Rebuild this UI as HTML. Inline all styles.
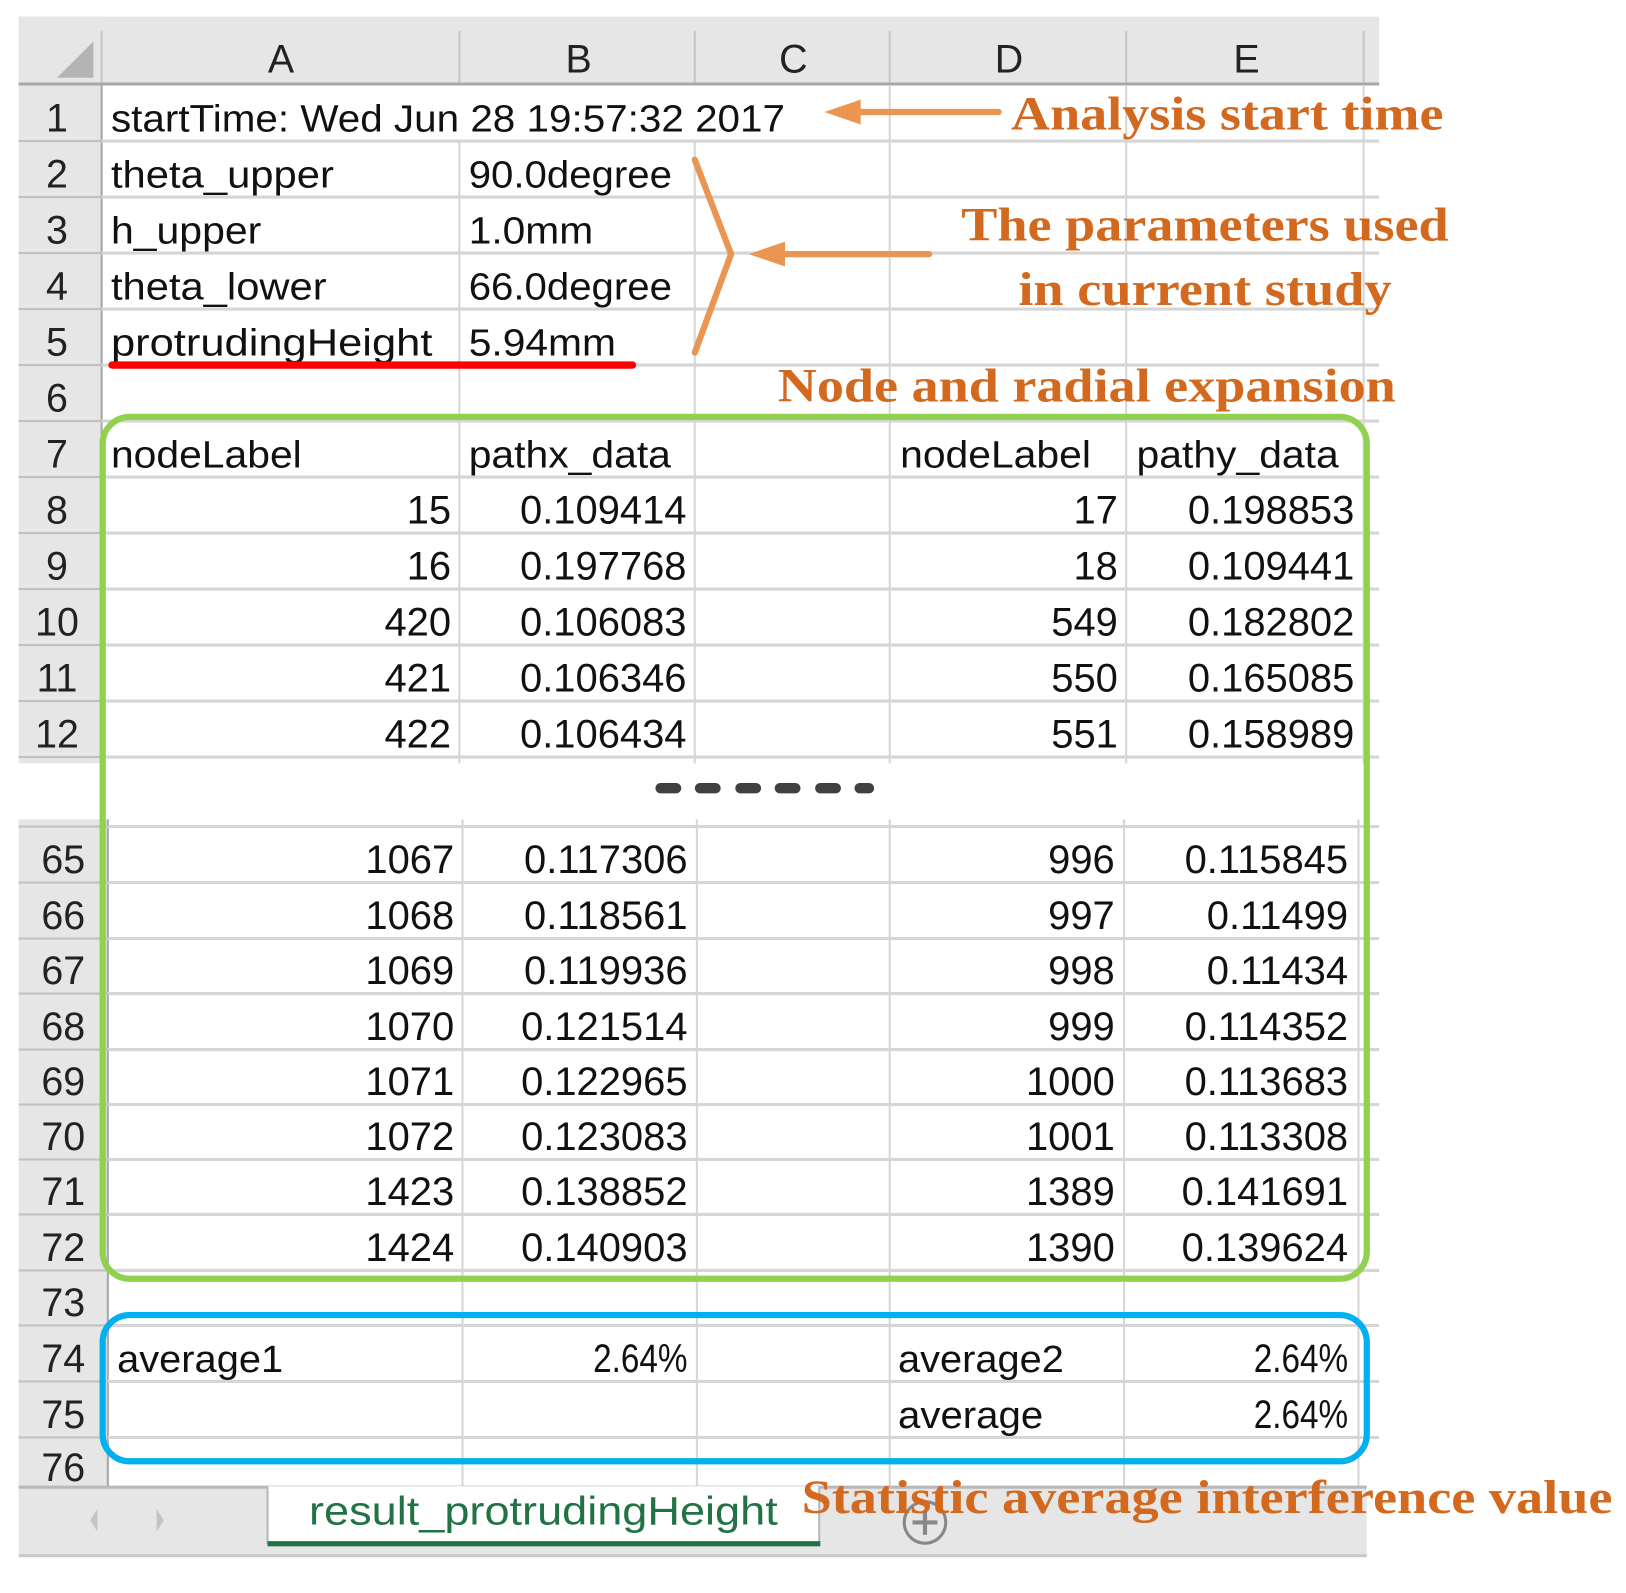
<!DOCTYPE html>
<html><head><meta charset="utf-8"><style>
html,body{margin:0;padding:0;background:#fff;overflow:hidden}
svg{display:block}
.t{font-family:"Liberation Sans",sans-serif;font-size:37px;fill:#111}
.h{font-family:"Liberation Sans",sans-serif;font-size:38px;fill:#222;text-anchor:middle}
.o{font-family:"Liberation Serif",serif;font-weight:bold;font-size:46px;fill:#D2691E}
.r{text-anchor:end}
</style></head><body>
<svg width="1626" height="1593" viewBox="0 0 1568 1536" preserveAspectRatio="none" xmlns="http://www.w3.org/2000/svg">
<rect width="1568" height="1536" fill="#fff"/>
<rect x="18" y="16" width="1312" height="66" fill="#e6e6e6"/>
<rect x="18" y="16" width="80" height="720" fill="#e6e6e6"/>
<rect x="18" y="790" width="86" height="643" fill="#e6e6e6"/>
<polygon points="90,40 90,75 55,75" fill="#b4b4b4"/>
<g stroke="#c6c6c6" stroke-width="2">
<line x1="98" y1="30" x2="98" y2="82"/><line x1="443" y1="30" x2="443" y2="82"/><line x1="670" y1="30" x2="670" y2="82"/><line x1="858" y1="30" x2="858" y2="82"/><line x1="1086" y1="30" x2="1086" y2="82"/><line x1="1315" y1="30" x2="1315" y2="82"/>
</g>
<line x1="18" y1="81" x2="1330" y2="81" stroke="#a8a8a8" stroke-width="3"/>
<line x1="98" y1="82" x2="98" y2="736" stroke="#a8a8a8" stroke-width="2"/>
<line x1="104" y1="790" x2="104" y2="1433" stroke="#a8a8a8" stroke-width="2"/>
<g stroke="#d6d6d6" stroke-width="2">
<line x1="443" y1="136" x2="443" y2="736"/><line x1="670" y1="136" x2="670" y2="736"/><line x1="858" y1="82" x2="858" y2="736"/><line x1="1086" y1="82" x2="1086" y2="736"/><line x1="1315" y1="82" x2="1315" y2="736"/>
<line x1="446" y1="790" x2="446" y2="1433"/><line x1="672" y1="790" x2="672" y2="1433"/><line x1="858" y1="790" x2="858" y2="1433"/><line x1="1084" y1="790" x2="1084" y2="1433"/><line x1="1310" y1="790" x2="1310" y2="1433"/>
</g>
<g stroke="#d6d6d6" stroke-width="3">
<line x1="98" y1="136" x2="1330" y2="136"/><line x1="98" y1="190" x2="1330" y2="190"/><line x1="98" y1="244" x2="1330" y2="244"/><line x1="98" y1="298" x2="1330" y2="298"/><line x1="98" y1="352" x2="1330" y2="352"/><line x1="98" y1="406" x2="1330" y2="406"/><line x1="98" y1="460" x2="1330" y2="460"/><line x1="98" y1="514" x2="1330" y2="514"/><line x1="98" y1="568" x2="1330" y2="568"/><line x1="98" y1="622" x2="1330" y2="622"/><line x1="98" y1="676" x2="1330" y2="676"/><line x1="98" y1="730" x2="1330" y2="730"/>
<line x1="104" y1="797" x2="1330" y2="797"/><line x1="104" y1="851" x2="1330" y2="851"/><line x1="104" y1="905" x2="1330" y2="905"/><line x1="104" y1="958" x2="1330" y2="958"/><line x1="104" y1="1012" x2="1330" y2="1012"/><line x1="104" y1="1065" x2="1330" y2="1065"/><line x1="104" y1="1118" x2="1330" y2="1118"/><line x1="104" y1="1171" x2="1330" y2="1171"/><line x1="104" y1="1225" x2="1330" y2="1225"/><line x1="104" y1="1278" x2="1330" y2="1278"/><line x1="104" y1="1332" x2="1330" y2="1332"/><line x1="104" y1="1386" x2="1330" y2="1386"/>
</g>
<g stroke="#c0c0c0" stroke-width="2">
<line x1="18" y1="136" x2="98" y2="136"/><line x1="18" y1="190" x2="98" y2="190"/><line x1="18" y1="244" x2="98" y2="244"/><line x1="18" y1="298" x2="98" y2="298"/><line x1="18" y1="352" x2="98" y2="352"/><line x1="18" y1="406" x2="98" y2="406"/><line x1="18" y1="460" x2="98" y2="460"/><line x1="18" y1="514" x2="98" y2="514"/><line x1="18" y1="568" x2="98" y2="568"/><line x1="18" y1="622" x2="98" y2="622"/><line x1="18" y1="676" x2="98" y2="676"/><line x1="18" y1="730" x2="98" y2="730"/>
<line x1="18" y1="797" x2="104" y2="797"/><line x1="18" y1="851" x2="104" y2="851"/><line x1="18" y1="905" x2="104" y2="905"/><line x1="18" y1="958" x2="104" y2="958"/><line x1="18" y1="1012" x2="104" y2="1012"/><line x1="18" y1="1065" x2="104" y2="1065"/><line x1="18" y1="1118" x2="104" y2="1118"/><line x1="18" y1="1171" x2="104" y2="1171"/><line x1="18" y1="1225" x2="104" y2="1225"/><line x1="18" y1="1278" x2="104" y2="1278"/><line x1="18" y1="1332" x2="104" y2="1332"/><line x1="18" y1="1386" x2="104" y2="1386"/>
</g>
<text class="h" x="271" y="70">A</text><text class="h" x="558" y="70">B</text><text class="h" x="765" y="70">C</text><text class="h" x="973" y="70">D</text><text class="h" x="1202" y="70">E</text>
<g class="h">
<text x="55" y="127">1</text><text x="55" y="181">2</text><text x="55" y="235">3</text><text x="55" y="289">4</text><text x="55" y="343">5</text><text x="55" y="397">6</text><text x="55" y="451">7</text><text x="55" y="505">8</text><text x="55" y="559">9</text><text x="55" y="613">10</text><text x="55" y="667">11</text><text x="55" y="721">12</text>
<text x="61" y="842">65</text><text x="61" y="896">66</text><text x="61" y="949">67</text><text x="61" y="1003">68</text><text x="61" y="1056">69</text><text x="61" y="1109">70</text><text x="61" y="1162">71</text><text x="61" y="1216">72</text><text x="61" y="1269">73</text><text x="61" y="1323">74</text><text x="61" y="1377">75</text><text x="61" y="1428">76</text>
</g>
<g class="t">
<text x="107" y="127" textLength="650" lengthAdjust="spacingAndGlyphs">startTime: Wed Jun 28 19:57:32 2017</text>
<text x="107" y="181" textLength="215" lengthAdjust="spacingAndGlyphs">theta_upper</text><text x="452" y="181" textLength="196" lengthAdjust="spacingAndGlyphs">90.0degree</text>
<text x="107" y="235" textLength="145" lengthAdjust="spacingAndGlyphs">h_upper</text><text x="452" y="235" textLength="120" lengthAdjust="spacingAndGlyphs">1.0mm</text>
<text x="107" y="289" textLength="208" lengthAdjust="spacingAndGlyphs">theta_lower</text><text x="452" y="289" textLength="196" lengthAdjust="spacingAndGlyphs">66.0degree</text>
<text x="107" y="343" textLength="310" lengthAdjust="spacingAndGlyphs">protrudingHeight</text><text x="452" y="343" textLength="142" lengthAdjust="spacingAndGlyphs">5.94mm</text>
<text x="107" y="451" textLength="184" lengthAdjust="spacingAndGlyphs">nodeLabel</text><text x="452" y="451" textLength="195" lengthAdjust="spacingAndGlyphs">pathx_data</text><text x="868" y="451" textLength="184" lengthAdjust="spacingAndGlyphs">nodeLabel</text><text x="1096" y="451" textLength="195" lengthAdjust="spacingAndGlyphs">pathy_data</text>
</g>
<g class="t r" style="font-size:38.5px">
<text x="435" y="505">15</text><text x="662" y="505">0.109414</text><text x="1078" y="505">17</text><text x="1306" y="505">0.198853</text>
<text x="435" y="559">16</text><text x="662" y="559">0.197768</text><text x="1078" y="559">18</text><text x="1306" y="559">0.109441</text>
<text x="435" y="613">420</text><text x="662" y="613">0.106083</text><text x="1078" y="613">549</text><text x="1306" y="613">0.182802</text>
<text x="435" y="667">421</text><text x="662" y="667">0.106346</text><text x="1078" y="667">550</text><text x="1306" y="667">0.165085</text>
<text x="435" y="721">422</text><text x="662" y="721">0.106434</text><text x="1078" y="721">551</text><text x="1306" y="721">0.158989</text>
<text x="438" y="842">1067</text><text x="663" y="842">0.117306</text><text x="1075" y="842">996</text><text x="1300" y="842">0.115845</text>
<text x="438" y="896">1068</text><text x="663" y="896">0.118561</text><text x="1075" y="896">997</text><text x="1300" y="896">0.11499</text>
<text x="438" y="949">1069</text><text x="663" y="949">0.119936</text><text x="1075" y="949">998</text><text x="1300" y="949">0.11434</text>
<text x="438" y="1003">1070</text><text x="663" y="1003">0.121514</text><text x="1075" y="1003">999</text><text x="1300" y="1003">0.114352</text>
<text x="438" y="1056">1071</text><text x="663" y="1056">0.122965</text><text x="1075" y="1056">1000</text><text x="1300" y="1056">0.113683</text>
<text x="438" y="1109">1072</text><text x="663" y="1109">0.123083</text><text x="1075" y="1109">1001</text><text x="1300" y="1109">0.113308</text>
<text x="438" y="1162">1423</text><text x="663" y="1162">0.138852</text><text x="1075" y="1162">1389</text><text x="1300" y="1162">0.141691</text>
<text x="438" y="1216">1424</text><text x="663" y="1216">0.140903</text><text x="1075" y="1216">1390</text><text x="1300" y="1216">0.139624</text>
<text x="663" y="1323" textLength="91" lengthAdjust="spacingAndGlyphs">2.64%</text><text x="1300" y="1323" textLength="91" lengthAdjust="spacingAndGlyphs">2.64%</text><text x="1300" y="1377" textLength="91" lengthAdjust="spacingAndGlyphs">2.64%</text>
</g>
<g class="t"><text x="113" y="1323" textLength="160" lengthAdjust="spacingAndGlyphs">average1</text><text x="866" y="1323" textLength="160" lengthAdjust="spacingAndGlyphs">average2</text><text x="866" y="1377" textLength="140" lengthAdjust="spacingAndGlyphs">average</text></g>
<g stroke="#404040" stroke-width="10" stroke-linecap="round">
<line x1="637" y1="760" x2="652" y2="760"/><line x1="675" y1="760" x2="690" y2="760"/><line x1="714" y1="760" x2="729" y2="760"/><line x1="752" y1="760" x2="767" y2="760"/><line x1="791" y1="760" x2="806" y2="760"/><line x1="829" y1="760" x2="838" y2="760"/>
</g>
<rect x="18" y="1433" width="1300" height="67" fill="#e6e6e6"/>
<line x1="18" y1="1434" x2="1318" y2="1434" stroke="#b8b8b8" stroke-width="3"/>
<line x1="18" y1="1500" x2="1318" y2="1500" stroke="#c8c8c8" stroke-width="3"/>
<rect x="258" y="1433" width="532" height="56" fill="#fff"/>
<line x1="258" y1="1433" x2="258" y2="1489" stroke="#b8b8b8" stroke-width="2"/><line x1="790" y1="1433" x2="790" y2="1489" stroke="#b8b8b8" stroke-width="2"/>
<rect x="258" y="1486" width="533" height="5" fill="#217346"/>
<text x="298" y="1470" style="font-family:'Liberation Sans',sans-serif;font-size:38px;fill:#217346" textLength="452" lengthAdjust="spacingAndGlyphs">result_protrudingHeight</text>
<polygon points="94,1455 87,1466 94,1477" fill="#c4c4c4"/><polygon points="151,1455 158,1466 151,1477" fill="#c4c4c4"/>
<circle cx="892" cy="1468" r="20" fill="none" stroke="#888" stroke-width="3"/>
<path d="M880 1468h24M892 1456v24" stroke="#888" stroke-width="4"/>
<line x1="108" y1="352" x2="610" y2="352" stroke="#f00" stroke-width="7" stroke-linecap="round"/>
<rect x="99" y="402" width="1219" height="831" rx="26" fill="none" stroke="#92d050" stroke-width="6"/>
<rect x="99" y="1268" width="1219" height="141" rx="26" fill="none" stroke="#00b0f0" stroke-width="6"/>
<g stroke="#eb9552" stroke-width="6" stroke-linecap="round" fill="none">
<line x1="825" y1="108" x2="963" y2="108"/>
<polyline points="670,154 705,245 670,340"/>
<line x1="748" y1="245" x2="896" y2="245"/>
</g>
<polygon points="795,108 830,96 830,120" fill="#eb9552"/>
<polygon points="722,245 757,233 757,257" fill="#eb9552"/>
<text class="o" x="975" y="125" textLength="417" lengthAdjust="spacingAndGlyphs">Analysis start time</text>
<text class="o" x="927" y="232" textLength="470" lengthAdjust="spacingAndGlyphs">The parameters used</text>
<text class="o" x="982" y="294" textLength="360" lengthAdjust="spacingAndGlyphs">in current study</text>
<text class="o" x="750" y="387" textLength="596" lengthAdjust="spacingAndGlyphs">Node and radial expansion</text>
<text class="o" x="773" y="1459" textLength="782" lengthAdjust="spacingAndGlyphs">Statistic average interference value</text>
</svg>
</body></html>
